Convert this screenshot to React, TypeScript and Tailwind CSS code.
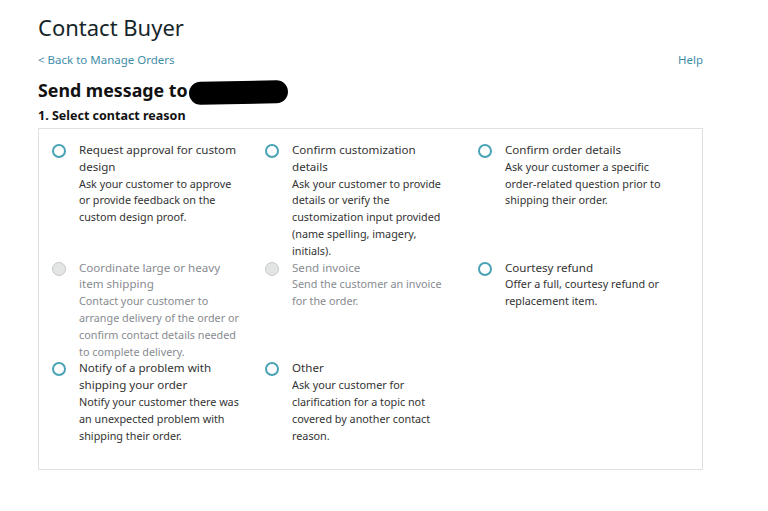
const REASONS = [
  {
    title: "Request approval for custom design",
    desc: "Ask your customer to approve or provide feedback on the custom design proof.",
  },
  {
    title: "Confirm customization details",
    desc: "Ask your customer to provide details or verify the customization input provided (name spelling, imagery, initials).",
  },
  {
    title: "Confirm order details",
    desc: "Ask your customer a specific order-related question prior to shipping their order.",
  },
  {
    title: "Coordinate large or heavy item shipping",
    desc: "Contact your customer to arrange delivery of the order or confirm contact details needed to complete delivery.",
    disabled: true,
  },
  {
    title: "Send invoice",
    desc: "Send the customer an invoice for the order.",
    disabled: true,
  },
  {
    title: "Courtesy refund",
    desc: "Offer a full, courtesy refund or replacement item.",
  },
  {
    title: "Notify of a problem with shipping your order",
    desc: "Notify your customer there was an unexpected problem with shipping their order.",
  },
  {
    title: "Other",
    desc: "Ask your customer for clarification for a topic not covered by another contact reason.",
  },
];

function Reason({ title, desc, disabled }: { title: string; desc: string; disabled?: boolean }) {
  return (
    <label className="flex items-start gap-[13px] cursor-pointer">
      <span
        className={
          disabled
            ? "mt-[2px] w-[14px] h-[14px] shrink-0 rounded-full border border-[#c6c9c9] bg-[#e3e5e5]"
            : "mt-[2px] w-[14px] h-[14px] shrink-0 rounded-full border-2 border-[#4aa3b5] bg-white"
        }
      />
      <span className={"w-[162px] " + (disabled ? "text-[#888b90]" : "text-[#333]")}>
        <span className="block text-[11.6px]">{title}</span>
        <span className="block text-[10.8px]">{desc}</span>
      </span>
    </label>
  );
}

export default function App() {
  return (
    <div
      className="min-h-screen bg-white pt-[12px] pl-[38px]"
      style={{ fontFamily: '"Noto Sans", "Open Sans", sans-serif' }}
    >
      <div className="w-[665px]">
        <h1 className="text-[22px] leading-[30px] text-[#16262a]">Contact Buyer</h1>
        <div className="mt-[10px] flex justify-between text-[11.5px] leading-[16px] text-[#3f8ea8]">
          <a href="#">&lt; Back to Manage Orders</a>
          <a href="#">Help</a>
        </div>
        <div className="mt-[8px] flex items-center">
          <h2 className="text-[17.8px] leading-[28px] font-bold text-[#111]">Send message to</h2>
          <span className="ml-[1px] mt-[4px] inline-block w-[99px] h-[23px] rounded-full bg-black -rotate-1" />
        </div>
        <h3 className="mt-[3px] text-[12.5px] leading-[18px] font-bold text-[#111]">
          1. Select contact reason
        </h3>
        <div className="mt-[3px] border border-[#dde1e1] pl-[13px] pt-[13px] pb-[25px] grid grid-cols-[213px_213px_213px] leading-[16.8px]">
          {REASONS.map((r) => (
            <Reason key={r.title} {...r} />
          ))}
        </div>
      </div>
    </div>
  );
}
